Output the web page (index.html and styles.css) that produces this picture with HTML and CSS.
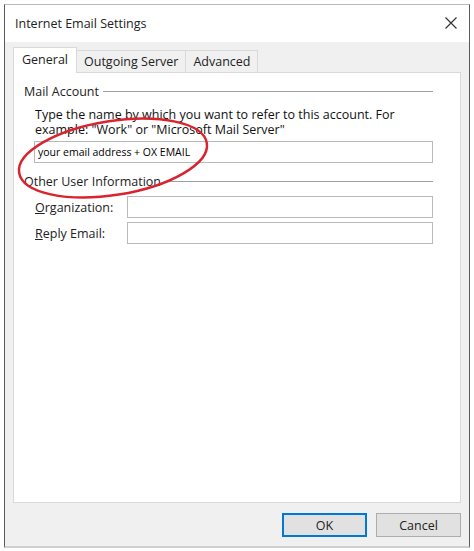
FILE: index.html
```html
<!DOCTYPE html>
<html>
<head>
<meta charset="utf-8">
<link rel="stylesheet" href="styles.css">
</head>
<body>
<div class="window">
  <div class="titlebar">
    <span class="title">Internet Email Settings</span>
    <svg class="close" width="12" height="12" viewBox="0 0 12 12"><path d="M0.5 0.5 L11.5 11.5 M11.5 0.5 L0.5 11.5" stroke="#333" stroke-width="1.2" fill="none"/></svg>
  </div>
  <div class="body">
    <div class="tabs">
      <div class="tab active">General</div>
      <div class="tab">Outgoing Server</div>
      <div class="tab">Advanced</div>
    </div>
    <div class="panel">
      <div class="group-head"><span>Mail Account</span><span class="rule"></span></div>
      <p class="desc">Type the name by which you want to refer to this account. For<br>example: "Work" or "Microsoft Mail Server"</p>
      <div class="field wide">your email address + OX EMAIL</div>
      <div class="group-head second"><span>Other User Information</span><span class="rule"></span></div>
      <div class="row"><span class="label"><u>O</u>rganization:</span><div class="field"></div></div>
      <div class="row"><span class="label"><u>R</u>eply Email:</span><div class="field"></div></div>
    </div>
    <div class="buttons">
      <div class="btn default">OK</div>
      <div class="btn">Cancel</div>
    </div>
  </div>
  <svg class="mark" width="466" height="544" viewBox="0 0 466 544">
    <ellipse cx="109" cy="154" rx="95" ry="37" transform="rotate(-9 109 154)" fill="none" stroke="#d9232e" stroke-width="2.5"/>
  </svg>
</div>
</body>
</html>
```
FILE: styles.css
```css
html, body {
  margin: 0;
  padding: 0;
  background: #ffffff;
}
body {
  font-family: "Open Sans", "Noto Sans", sans-serif;
  font-size: 12px;
  color: #1a1a1a;
}
.window {
  position: relative;
  margin: 4px 0 0 4px;
  width: 466px;
  height: 544px;
  box-sizing: border-box;
  border-top: 1px solid #b8b8b8;
  border-left: 1px solid #5a5a5a;
  border-right: 1px solid #5a5a5a;
  border-bottom: 2px solid #cfcfcf;
  display: flex;
  flex-direction: column;
  background: #f0f0f0;
}
.titlebar {
  height: 37px;
  background: #ffffff;
  display: flex;
  align-items: center;
  justify-content: space-between;
  padding: 0 12px 0 10px;
  flex: none;
}
.title {
  font-size: 12.5px;
  color: #222;
}
.close {
  margin-top: -2px;
}
.body {
  flex: 1;
  display: flex;
  flex-direction: column;
  padding: 5px 8px 0 8px;
}
.tabs {
  display: flex;
  align-items: flex-end;
  height: 25px;
  position: relative;
  z-index: 1;
}
.tab {
  height: 22px;
  box-sizing: border-box;
  border: 1px solid #d9d9d9;
  border-bottom: none;
  background: #f0f0f0;
  padding: 0 7px;
  display: flex;
  align-items: center;
  font-size: 12.5px;
  color: #222;
  margin-left: -1px;
}
.tab.active {
  height: 26px;
  margin-bottom: -1px;
  background: #ffffff;
  margin-left: 0;
  padding: 0 8px 2px 8px;
}
.panel {
  height: 431px;
  box-sizing: border-box;
  background: #ffffff;
  border: 1px solid #d9d9d9;
  padding: 10px 27px 0 10px;
  display: flex;
  flex-direction: column;
}
.group-head {
  display: flex;
  align-items: center;
  height: 16px;
  font-size: 12.5px;
  color: #222;
}
.group-head .rule {
  flex: 1;
  height: 1px;
  background: #a0a0a0;
  margin-left: 4px;
  margin-top: 1px;
}
.group-head.second {
  margin-top: 10px;
}
.desc {
  margin: 8px 0 0 11px;
  font-size: 12.5px;
  line-height: 15px;
  color: #111;
}
.field {
  height: 22px;
  box-sizing: border-box;
  border: 1px solid #b9b9b9;
  background: #fff;
  flex: 1;
}
.field.wide {
  flex: none;
  margin: 4px 0 0 10px;
  font-size: 10.5px;
  color: #000;
  display: flex;
  align-items: center;
  padding-left: 3px;
}
.row {
  display: flex;
  align-items: center;
  margin: 4px 0 0 11px;
}
.row:nth-of-type(1) {
  margin-top: 0;
}
.group-head.second + .row {
  margin-top: 7px;
}
.label {
  width: 92px;
  font-size: 12.5px;
  color: #222;
}
.buttons {
  display: flex;
  justify-content: flex-end;
  gap: 9px;
  margin-top: 10px;
  padding-right: 0;
}
.btn {
  width: 85px;
  height: 24px;
  box-sizing: border-box;
  border: 1px solid #adadad;
  background: #e1e1e1;
  display: flex;
  align-items: center;
  justify-content: center;
  font-size: 12.5px;
  color: #222;
}
.btn.default {
  border: 2px solid #0078d7;
}
.mark {
  position: absolute;
  left: -1px;
  top: -1px;
  pointer-events: none;
}
```
